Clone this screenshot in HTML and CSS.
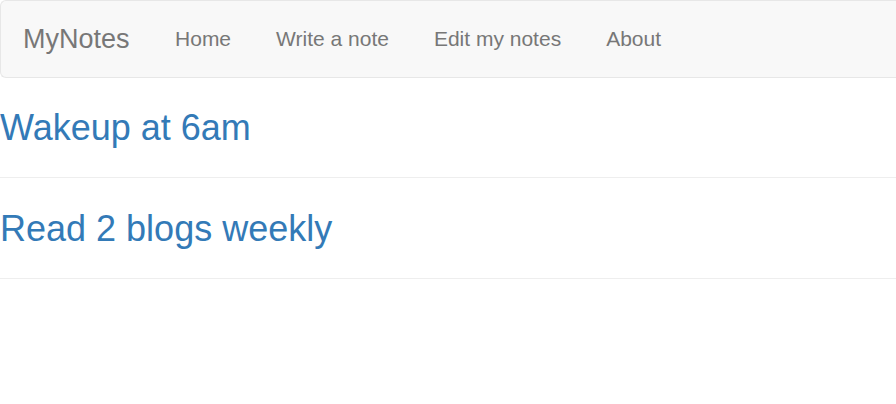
FILE: index.html
```html
<!DOCTYPE html>
<html lang="en">
<head>
<meta charset="utf-8">
<title>MyNotes</title>
<link rel="stylesheet" href="styles.css">
</head>
<body>
<nav class="navbar">
  <a class="brand" href="#">MyNotes</a>
  <ul class="nav">
    <li><a href="#">Home</a></li>
    <li><a href="#">Write a note</a></li>
    <li><a href="#">Edit my notes</a></li>
    <li><a href="#">About</a></li>
  </ul>
</nav>
<main class="notes">
  <h3 class="note-title"><a href="#">Wakeup at 6am</a></h3>
  <hr class="sep">
  <h3 class="note-title"><a href="#">Read 2 blogs weekly</a></h3>
  <hr class="sep">
</main>
</body>
</html>
```
FILE: styles.css
```css
html, body {
  margin: 0;
  padding: 0;
  background: #fff;
  font-family: "Liberation Sans", Arial, sans-serif;
}

.navbar {
  display: flex;
  align-items: flex-start;
  height: 76px;
  background: #f8f8f8;
  border: 1px solid #e7e7e7;
  border-right: none;
  border-radius: 6px 0 0 6px;
}

.brand {
  display: block;
  padding: 23px 23px 0 22px;
  font-size: 27px;
  line-height: 30px;
  color: #777;
  text-decoration: none;
}

.nav {
  display: flex;
  list-style: none;
  margin: 0;
  padding: 0;
}

.nav a {
  display: block;
  padding: 23px 22.5px 0;
  font-size: 21px;
  line-height: 30px;
  color: #777;
  text-decoration: none;
}

.notes {
  display: flex;
  flex-direction: column;
}

.note-title {
  margin: 31px 0 29px;
  font-size: 36px;
  font-weight: normal;
  line-height: 40px;
}

.note-title:first-child {
  margin-top: 30px;
}

.note-title a {
  color: #337ab7;
  text-decoration: none;
}

.sep {
  margin: 0;
  border: 0;
  border-top: 1px solid #eee;
}
```
